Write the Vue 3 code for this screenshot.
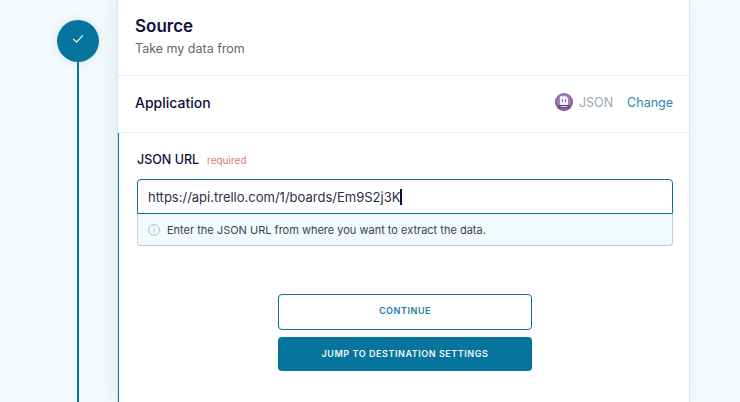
<script setup>
const url = 'https://api.trello.com/1/boards/Em9S2j3K'
</script>

<template>
  <div class="page">
    <div class="rail">
      <div class="circle">
        <svg width="14" height="14" viewBox="0 0 14 14" fill="none" stroke="#fff" stroke-width="1.1" stroke-linecap="round" stroke-linejoin="round"><path d="M2.4 7.2 5.6 10.2 11.6 3.6" /></svg>
      </div>
      <div class="line"></div>
    </div>
    <div class="card">
      <header class="head">
        <h1>Source</h1>
        <p>Take my data from</p>
      </header>
      <div class="app-row">
        <span class="app-label">Application</span>
        <div class="app-right">
          <svg class="json-logo" width="18" height="18" viewBox="0 0 18 18">
            <defs>
              <radialGradient id="jsonBg" cx="50%" cy="45%" r="55%">
                <stop offset="60%" stop-color="#a27fb4" />
                <stop offset="100%" stop-color="#6f4488" />
              </radialGradient>
            </defs>
            <circle cx="9" cy="9" r="9" fill="url(#jsonBg)" />
            <path d="M5 3.2h6l2 2V12H5z" fill="#f3eef6" />
            <rect x="7" y="6.5" width="1" height="2.3" fill="#6c4480" />
            <rect x="10" y="6.5" width="1" height="2.3" fill="#6c4480" />
            <rect x="4" y="12" width="10" height="2.8" fill="#5f3a74" />
            <rect x="5.5" y="13" width="7" height="0.9" fill="#e6dcec" />
          </svg>
          <span class="json-name">JSON</span>
          <a class="change">Change</a>
        </div>
      </div>
      <section class="form">
        <div class="label-row">
          <label>JSON URL</label>
          <span class="req">required</span>
        </div>
        <div class="field">
          <div class="input"><span>{{ url }}</span><i class="caret"></i></div>
          <div class="hint">
            <svg width="12" height="12" viewBox="0 0 12 12" fill="none" stroke="#a9bcc6" stroke-width="1"><circle cx="6" cy="6" r="5.3" /><path d="M6 5.2v3.4M6 3.2v1" /></svg>
            <span>Enter the JSON URL from where you want to extract the data.</span>
          </div>
        </div>
        <div class="actions">
          <button class="btn outline">CONTINUE</button>
          <button class="btn solid">JUMP TO DESTINATION SETTINGS</button>
        </div>
      </section>
    </div>
  </div>
</template>

<style scoped>
.page {
  width: 740px;
  height: 402px;
  overflow: hidden;
  display: flex;
  background: #f4f9fb;
  font-family: Inter, "Liberation Sans", sans-serif;
  color: #10103a;
  box-sizing: border-box;
}
.rail {
  width: 117px;
  flex: none;
  display: flex;
  flex-direction: column;
  padding: 20px 0 0 57px;
  box-sizing: border-box;
  background: linear-gradient(to right, #f4f9fb 85%, #eef5f8 100%);
}
.circle {
  width: 42px;
  height: 42px;
  flex: none;
  box-sizing: border-box;
  padding: 0 1px 4px 0;
  border-radius: 50%;
  background: #07749e;
  display: flex;
  align-items: center;
  justify-content: center;
  box-shadow: 0 0 10px rgba(7, 116, 158, 0.14);
}
.line {
  width: 2px;
  flex: 1;
  margin-left: 20px;
  background: #07749e;
}
.card {
  width: 573px;
  flex: none;
  background: #fff;
  border-left: 1px solid #d6e6ee;
  border-right: 1px solid #d6e6ee;
  box-sizing: border-box;
  display: flex;
  flex-direction: column;
  box-shadow: 0 0 16px rgba(7, 80, 120, 0.05);
}
.head {
  height: 76px;
  flex: none;
  box-sizing: border-box;
  padding: 16px 16px 0 17px;
  border-bottom: 1px solid #e8edf0;
}
h1 {
  margin: 0;
  font-size: 17px;
  line-height: 20px;
  font-weight: 600;
}
.head p {
  margin: 5px 0 0;
  font-size: 12.5px;
  line-height: 16px;
  color: #5f6770;
}
.app-row {
  height: 57px;
  flex: none;
  box-sizing: border-box;
  padding: 0 16px 4px 17px;
  display: flex;
  align-items: center;
  justify-content: space-between;
  border-bottom: 1px solid #e8edf0;
}
.app-label {
  font-size: 14px;
  font-weight: 500;
}
.app-right {
  display: flex;
  align-items: center;
}
.json-name {
  margin-left: 6px;
  font-size: 12.5px;
  color: #98a8b4;
}
.change {
  margin-left: 14px;
  font-size: 12.5px;
  color: #2a86ad;
}
.form {
  flex: 1;
  border-left: 1px solid #07749e;
  box-sizing: border-box;
  padding: 19px 16px 0 18px;
}
.label-row {
  display: flex;
  align-items: baseline;
  height: 18px;
}
label {
  font-size: 12.5px;
  font-weight: 500;
}
.req {
  margin-left: 8px;
  font-size: 10px;
  color: #dc7d6e;
}
.field {
  margin-top: 9px;
}
.input {
  height: 35px;
  box-sizing: border-box;
  border: 1px solid #07749e;
  border-radius: 4px 4px 0 0;
  display: flex;
  align-items: center;
  padding-left: 10px;
  font-size: 13px;
  color: #2a3048;
}
.caret {
  width: 2px;
  height: 16px;
  background: #10103a;
}
.hint {
  height: 32px;
  box-sizing: border-box;
  border: 1px solid #bdd0da;
  border-top: none;
  border-radius: 0 0 4px 4px;
  background: #f2fafd;
  display: flex;
  align-items: center;
  gap: 7px;
  padding-left: 10px;
  font-size: 11px;
  color: #3c4258;
}
.actions {
  margin-top: 48px;
  display: flex;
  flex-direction: column;
  align-items: center;
  gap: 7px;
}
.btn {
  width: 254px;
  font-family: inherit;
  font-size: 9px;
  font-weight: 600;
  letter-spacing: 0.55px;
  border-radius: 4px;
  padding: 0;
}
.outline {
  height: 36px;
  padding-bottom: 3px;
  background: #fff;
  border: 1px solid #07749e;
  color: #1a7da5;
}
.solid {
  height: 34px;
  padding-bottom: 2px;
  background: #07749e;
  border: none;
  color: #f2f8fb;
}
</style>
